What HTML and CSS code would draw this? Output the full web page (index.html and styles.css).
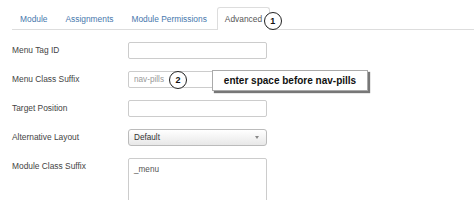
FILE: index.html
```html
<!DOCTYPE html>
<html lang="en">
<head>
    <meta charset="UTF-8" />
    <title>Module - Advanced</title>
    <link rel="stylesheet" href="styles.css">
</head>
<body>

    <ul class="tabs">
        <li><a href="#">Module</a></li>
        <li><a href="#">Assignments</a></li>
        <li><a href="#">Module Permissions</a></li>
        <li class="active">
            <a href="#">Advanced</a>
            <span class="step step-tab">1</span>
        </li>
    </ul>

    <div class="form">
        <div class="row">
            <label>Menu Tag ID</label>
            <input type="text" class="field">
        </div>
        <div class="row">
            <label>Menu Class Suffix</label>
            <div class="field-wrap">
                <input type="text" class="field muted" value="nav-pills">
                <span class="step step-field">2</span>
                <div class="callout">enter space before nav-pills</div>
            </div>
        </div>
        <div class="row">
            <label>Target Position</label>
            <input type="text" class="field">
        </div>
        <div class="row">
            <label>Alternative Layout</label>
            <div class="select">
                <span>Default</span>
                <span class="caret"></span>
            </div>
        </div>
        <div class="row row-top">
            <label>Module Class Suffix</label>
            <textarea class="field area">_menu</textarea>
        </div>
    </div>

</body>
</html>
```

FILE: styles.css
```css
body {
    font-family: "Liberation Sans", Arial, sans-serif;
    margin: 0;
    padding: 0;
    background-color: #fff;
    color: #444;
    font-size: 8.4px;
}
.tabs {
    list-style: none;
    display: flex;
    margin: 7px 0 0 12px;
    padding: 0;
    border-bottom: 1px solid #ddd;
}
.tabs li {
    position: relative;
    margin-right: 2px;
    margin-bottom: -1px;
    border: 1px solid transparent;
    border-bottom: none;
}
.tabs li a {
    display: block;
    height: 22px;
    line-height: 22px;
    padding: 0 7px;
    text-decoration: none;
    color: #4778ad;
}
.tabs li.active {
    background: #fff;
    border-color: #ddd;
    border-radius: 3px 3px 0 0;
}
.tabs li.active a {
    color: #555;
}
.step {
    position: absolute;
    width: 16px;
    height: 16px;
    line-height: 16px;
    border: 1.5px solid #222;
    border-radius: 50%;
    background: #fff;
    color: #111;
    font-weight: bold;
    font-size: 9px;
    text-align: center;
}
.step-tab {
    left: 46px;
    top: 4px;
}
.form {
    padding: 12px 0 0 12px;
}
.row {
    display: flex;
    align-items: center;
    margin-bottom: 12px;
}
.row-top {
    align-items: flex-start;
}
.row label {
    width: 116px;
    line-height: 17px;
    color: #444;
}
.field {
    box-sizing: border-box;
    width: 139px;
    height: 17px;
    margin: 0;
    padding: 0 5px;
    border: 1px solid #ccc;
    border-radius: 2px;
    font-family: "Liberation Sans", Arial, sans-serif;
    font-size: 8.2px;
    color: #555;
    background: #fff;
}
.field.muted {
    color: #999;
}
.area {
    height: 50px;
    padding: 6px 5px;
    resize: none;
}
.field-wrap {
    position: relative;
}
.step-field {
    left: 41px;
    top: 0;
}
.callout {
    position: absolute;
    left: 84px;
    top: -1px;
    width: 154px;
    height: 19px;
    line-height: 19px;
    border: 1px solid #aaa;
    background: #fff;
    box-shadow: 2px 2px 1px #777;
    color: #111;
    font-weight: bold;
    font-size: 10px;
    text-align: center;
}
.select {
    box-sizing: border-box;
    width: 139px;
    height: 17px;
    display: flex;
    align-items: center;
    justify-content: space-between;
    padding: 0 7px 0 5px;
    border: 1px solid #bbb;
    border-radius: 3px;
    background: linear-gradient(#fff, #e8e8e8);
    font-size: 8.2px;
    color: #333;
}
.caret {
    width: 0;
    height: 0;
    border-left: 2px solid transparent;
    border-right: 2px solid transparent;
    border-top: 3px solid #888;
}
```
